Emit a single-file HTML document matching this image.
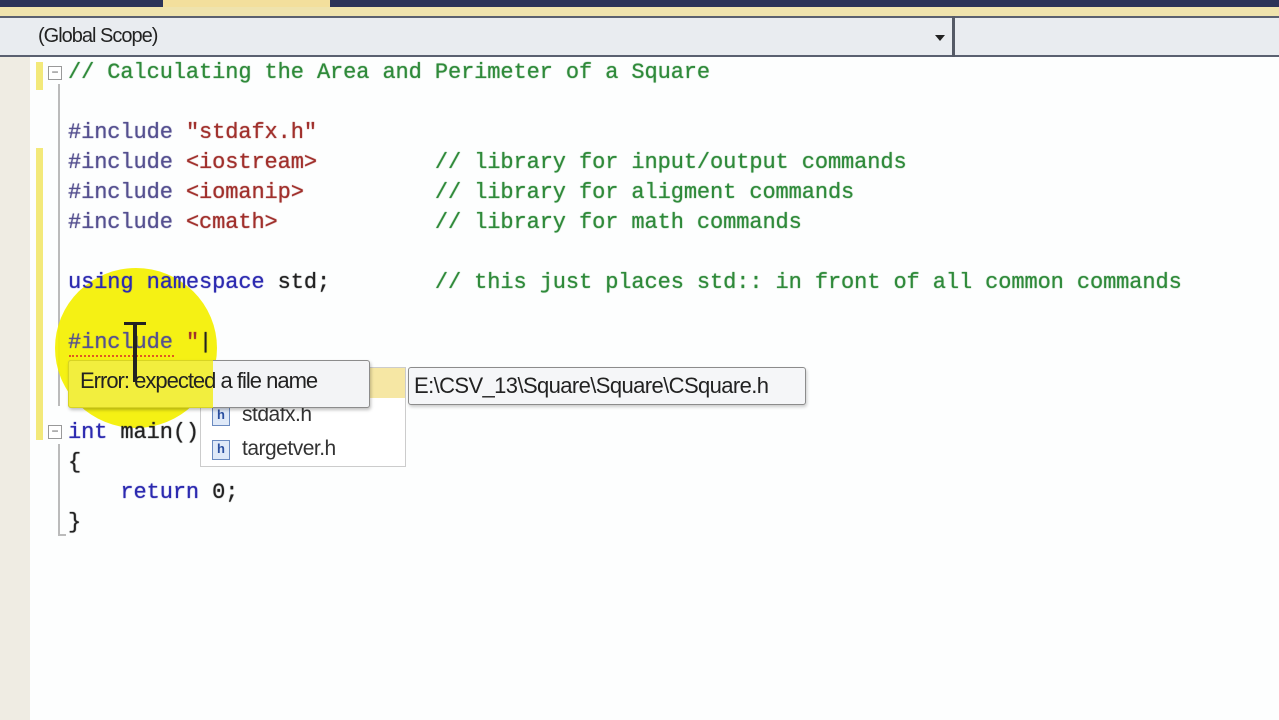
<!DOCTYPE html>
<html><head><meta charset="utf-8"><style>
*{margin:0;padding:0;box-sizing:border-box}
body{width:1279px;height:720px;overflow:hidden;background:#fdfefe;position:relative;font-family:"Liberation Sans",sans-serif}
.a{position:absolute}
.code{position:absolute;left:68px;font-family:"Liberation Mono",monospace;font-size:22px;line-height:30px;white-space:pre;color:#222;font-weight:normal;letter-spacing:-0.1px;text-shadow:0 0 1px currentColor}
.k{color:#2c2ab0}.s{color:#a0302c}.c{color:#2f8a3a}.p{color:#555090}
</style></head><body>
<div class="a" style="left:0;top:0;width:1279px;height:7px;background:#2b3358"></div>
<div class="a" style="left:163px;top:0;width:167px;height:7px;background:#f3df9c"></div>
<div class="a" style="left:0;top:7px;width:1279px;height:9px;background:#efe3ad"></div>
<div class="a" style="left:0;top:16px;width:1279px;height:41px;background:#e9ecf0;border-top:2px solid #5a6070;border-bottom:2px solid #5a6070"></div>
<div class="a" style="left:952px;top:16px;width:3px;height:41px;background:#555a66"></div>
<div class="a" style="left:38px;top:25px;font-size:20px;color:#222;letter-spacing:-1px">(Global Scope)</div>
<div class="a" style="left:935px;top:35px;width:0;height:0;border-left:5px solid transparent;border-right:5px solid transparent;border-top:6px solid #222"></div>
<div class="a" style="left:0;top:57px;width:30px;height:663px;background:#efece3"></div>
<div class="a" style="left:36px;top:62px;width:7px;height:28px;background:#f3e97a"></div>
<div class="a" style="left:36px;top:148px;width:7px;height:292px;background:#f3e97a"></div>
<div class="a" style="left:58px;top:84px;width:2px;height:322px;background:#bbb"></div>
<div class="a" style="left:58px;top:444px;width:2px;height:92px;background:#bbb"></div>
<div class="a" style="left:58px;top:534px;width:8px;height:2px;background:#bbb"></div>
<div class="a" style="left:48px;top:66px;width:14px;height:14px;border:1px solid #999;background:#fff;font-size:12px;line-height:10px;text-align:center;color:#555">−</div>
<div class="a" style="left:48px;top:425px;width:14px;height:14px;border:1px solid #999;background:#fff;font-size:12px;line-height:10px;text-align:center;color:#555">−</div>
<div class="a" style="left:55px;top:268px;width:162px;height:160px;border-radius:50%;background:#f4f000;opacity:.92"></div>
<div class="code" style="top:58px"><span class="c">// Calculating the Area and Perimeter of a Square</span>

<span class="p">#include</span> <span class="s">"stdafx.h"</span>
<span class="p">#include</span> <span class="s">&lt;iostream&gt;</span>         <span class="c">// library for input/output commands</span>
<span class="p">#include</span> <span class="s">&lt;iomanip&gt;</span>          <span class="c">// library for aligment commands</span>
<span class="p">#include</span> <span class="s">&lt;cmath&gt;</span>            <span class="c">// library for math commands</span>

<span class="k">using namespace</span> std;        <span class="c">// this just places std:: in front of all common commands</span>

<span class="p">#include</span> <span class="s">"</span>|


<span class="k">int</span> main()
{
    <span class="k">return</span> 0;
}</div>
<div class="a" style="left:69px;top:354px;width:105px;height:3px;border-bottom:2px dotted #e05a20"></div>
<div class="a" style="left:200px;top:367px;width:206px;height:100px;background:#fff;border:1px solid #ccc"></div>
<div class="a" style="left:201px;top:368px;width:204px;height:30px;background:#f6e7a4"></div>
<div class="a" style="left:212px;top:406px;width:18px;height:20px;border:1px solid #6a8ac0;background:#dfe9f8;font-size:13px;color:#2a4fa0;text-align:center;font-weight:bold">h</div>
<div class="a" style="left:242px;top:403px;font-size:21px;color:#333;letter-spacing:-0.5px">stdafx.h</div>
<div class="a" style="left:212px;top:440px;width:18px;height:20px;border:1px solid #6a8ac0;background:#dfe9f8;font-size:13px;color:#2a4fa0;text-align:center;font-weight:bold">h</div>
<div class="a" style="left:242px;top:437px;font-size:21px;color:#333;letter-spacing:-0.5px">targetver.h</div>
<div class="a" style="left:68px;top:360px;width:302px;height:48px;background:#f3f4f6;border:1px solid #8c8c8c;border-radius:3px;box-shadow:1px 2px 3px rgba(0,0,0,.25)"></div>
<div class="a" style="left:68px;top:360px;width:145px;height:48px;background:#f1ec00;opacity:.75;border-radius:3px 0 0 3px"></div>
<div class="a" style="left:80px;top:368px;font-size:22px;color:#222;letter-spacing:-1px">Error: expected a file name</div>
<div class="a" style="left:133px;top:322px;width:4px;height:60px;background:#222"></div>
<div class="a" style="left:124px;top:322px;width:22px;height:3px;background:#222"></div>
<div class="a" style="left:408px;top:367px;width:398px;height:38px;background:#f5f6f8;border:1px solid #8c8c8c;border-radius:3px;box-shadow:1px 2px 3px rgba(0,0,0,.2)"></div>
<div class="a" style="left:414px;top:373px;font-size:22px;color:#222;letter-spacing:-0.6px">E:\CSV_13\Square\Square\CSquare.h</div>
</body></html>
